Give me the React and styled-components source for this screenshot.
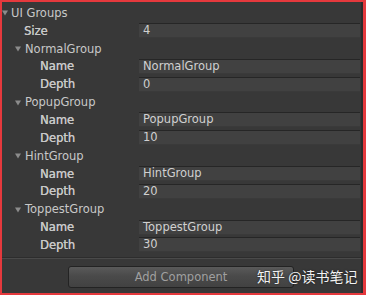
import styled, { createGlobalStyle } from 'styled-components';

const GlobalStyle = createGlobalStyle`
  html, body {
    margin: 0;
    padding: 0;
    background: #383838;
  }
  * {
    box-sizing: border-box;
  }
`;

const groups = [
  { name: 'NormalGroup', depth: '0' },
  { name: 'PopupGroup', depth: '10' },
  { name: 'HintGroup', depth: '20' },
  { name: 'ToppestGroup', depth: '30' },
];

// indent in px for each nesting level
const foldIndent = [0, 13];
const labelIndent = [0, 22, 38];

const Arrow = () => (
  <svg width="6" height="6" viewBox="0 0 6 6">
    <path d="M0 0.5 L6 0.5 L3 5.5 Z" fill="#8c8c8c" />
  </svg>
);

const App = () => (
  <>
    <GlobalStyle />
    <Frame>
      <Inspector>
        <Rows>
          <Row>
            <Foldout $level={0}>
              <Arrow />
              <span>UI Groups</span>
            </Foldout>
          </Row>
          <Row>
            <Label $level={1}>Size</Label>
            <Field>4</Field>
          </Row>
          {groups.map((g) => (
            <Group key={g.name}>
              <Row>
                <Foldout $level={1}>
                  <Arrow />
                  <span>{g.name}</span>
                </Foldout>
              </Row>
              <Row>
                <Label $level={2}>Name</Label>
                <Field>{g.name}</Field>
              </Row>
              <Row>
                <Label $level={2}>Depth</Label>
                <Field>{g.depth}</Field>
              </Row>
            </Group>
          ))}
        </Rows>
        <Footer>
          <AddButton>Add Component</AddButton>
          <Watermark>知乎 @读书笔记</Watermark>
        </Footer>
      </Inspector>
    </Frame>
  </>
);

const Frame = styled.div`
  width: 366px;
  height: 295px;
  border: 2px solid #e5393d;
  border-right-width: 3px;
  background: #383838;
`;

const Inspector = styled.div`
  height: 100%;
  display: flex;
  flex-direction: column;
  border-right: 2px solid #2c2c2c;
  font-family: 'DejaVu Sans', 'Liberation Sans', sans-serif;
  font-size: 11.5px;
  color: #c8c8c8;
`;

const Rows = styled.div`
  display: flex;
  flex-direction: column;
  padding-top: 2px;
`;

const Group = styled.div`
  display: contents;
`;

const Row = styled.div`
  height: 17.85px;
  display: grid;
  grid-template-columns: 137px 1fr;
  align-items: center;
`;

const Foldout = styled.div`
  display: flex;
  align-items: center;
  gap: ${(p) => (p.$level === 0 ? 3 : 4)}px;
  grid-column: 1 / 3;
  padding-left: ${(p) => foldIndent[p.$level]}px;
  svg {
    margin-top: 1px;
  }
`;

const Label = styled.div`
  padding-left: ${(p) => labelIndent[p.$level]}px;
  text-shadow: 0.3px 0 0 #c8c8c8;
`;

const Field = styled.div`
  height: 15px;
  margin-right: 1px;
  background: #414141;
  border-top: 1px solid #262626;
  border-bottom: 1px solid #3a3a3a;
  padding: 0 4px;
  line-height: 13px;
  color: #d0d0d0;
`;

const Footer = styled.div`
  position: relative;
  margin-top: 3px;
  border-top: 1px solid #2d2d2d;
  box-shadow: inset 0 1px 0 #4a4a4a;
  flex: 1;
  display: flex;
  align-items: flex-start;
  padding: 8px 0 0 66px;
`;

const AddButton = styled.button`
  width: 226px;
  height: 22px;
  border: 1px solid #232323;
  border-radius: 3px;
  background: linear-gradient(#5a5a5a, #4a4a4a 45%, #424242);
  color: #a0a0a0;
  font-family: 'DejaVu Sans', 'Liberation Sans', sans-serif;
  font-size: 11.5px;
  padding: 0;
`;

const Watermark = styled.div`
  position: absolute;
  left: 255px;
  top: 8px;
  color: #f2f2f2;
  font-family: 'Noto Sans CJK SC', 'DejaVu Sans', sans-serif;
  font-size: 14px;
  text-shadow: 0 0 2px rgba(0, 0, 0, 0.6);
`;

export default App;
